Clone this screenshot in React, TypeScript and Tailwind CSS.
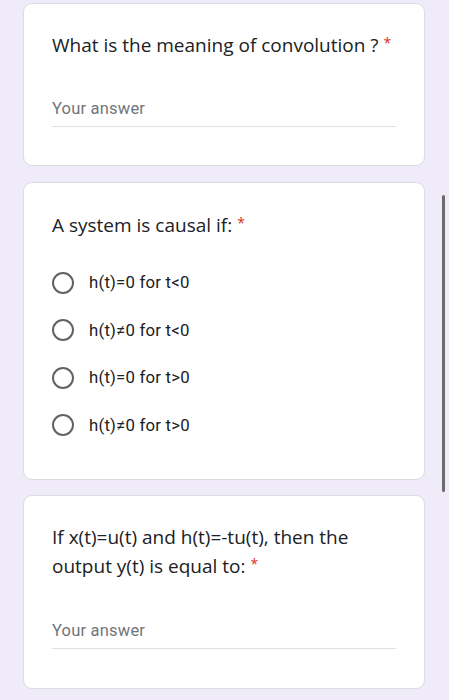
import React from 'react';

const titleFont = { fontFamily: '"Open Sans", Roboto, sans-serif' };

function Required() {
  return <span className="text-[#d93025] ml-[5px] text-[14px] leading-none align-[4px]">*</span>;
}

function AnswerField({ className = '' }: { className?: string }) {
  return (
    <div className={`border-b border-[#e0e0e0] pb-[5px] ${className}`}>
      <div className="text-[16.5px] leading-[24px] text-[#70757a] font-['Roboto',sans-serif] tracking-[0.2px]">
        Your answer
      </div>
    </div>
  );
}

function Radio({ label }: { label: string }) {
  return (
    <div className="h-[47.5px] flex items-center">
      <span className="w-[22px] h-[22px] rounded-full border-[2px] border-[#5f6368] shrink-0" />
      <span className="ml-[15px] text-[16.8px] text-[#202124] font-['Roboto',sans-serif] tracking-[0.2px]">
        {label}
      </span>
    </div>
  );
}

export default function App() {
  const options = ['h(t)=0 for t<0', 'h(t)≠0 for t<0', 'h(t)=0 for t>0', 'h(t)≠0 for t>0'];

  return (
    <div className="relative min-h-[700px] bg-[#f0ebf8] pt-[3px] pl-[23px] pr-[24px] pb-[13px]">
      <div className="bg-white rounded-[9px] border border-[#dadce0] px-[28px] pt-[27px] pb-[38px]">
        <div className="text-[19px] leading-[28px] text-[#202124]" style={titleFont}>
          What is the meaning of convolution ?<Required />
        </div>
        <AnswerField className="mt-[38px]" />
      </div>

      <div className="mt-[16px] bg-white rounded-[9px] border border-[#dadce0] px-[28px] pt-[28px] pb-[30px]">
        <div className="text-[19px] leading-[28px] text-[#202124]" style={titleFont}>
          A system is causal if:<Required />
        </div>
        <div className="mt-[20px]">
          {options.map((o) => (
            <Radio key={o} label={o} />
          ))}
        </div>
      </div>

      <div className="mt-[15px] bg-white rounded-[9px] border border-[#dadce0] px-[28px] pt-[27px] pb-[39px]">
        <div className="text-[19px] leading-[29px] text-[#202124]" style={titleFont}>
          If x(t)=u(t) and h(t)=-tu(t), then the
          <br />
          output y(t) is equal to:<Required />
        </div>
        <AnswerField className="mt-[38px]" />
      </div>

      <div className="absolute left-[442px] top-[195px] w-[3px] h-[297px] rounded-full bg-[#6b6b6b]" />
    </div>
  );
}
